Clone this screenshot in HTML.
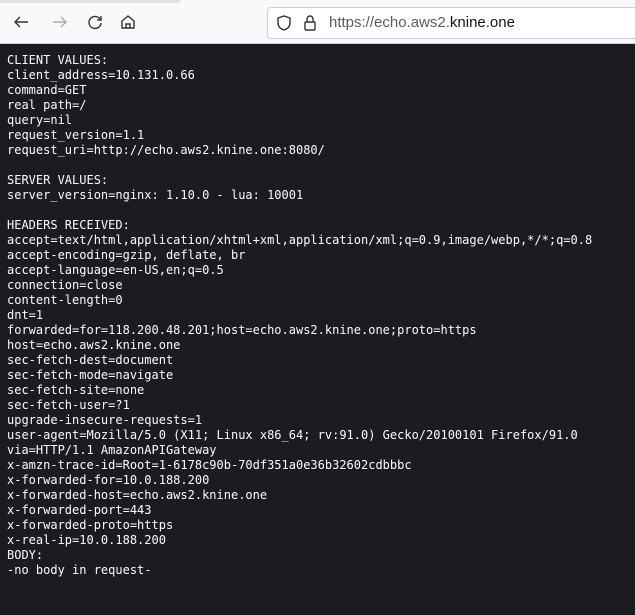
<!DOCTYPE html>
<html><head><style>
html,body{margin:0;padding:0;width:635px;height:615px;overflow:hidden;background:#1c1b22}
.tb{position:absolute;left:0;top:0;width:635px;height:43px;background:#f9f9fb;border-bottom:1px solid #cfcfd8}
.top{position:absolute;left:0;top:0;width:180px;height:3px;background:#e0e0e6}
.url{position:absolute;left:267px;top:7px;width:380px;height:30px;background:#fff;border:1px solid #cfcfd8;border-radius:4px;font:15px "Liberation Sans",sans-serif;color:#5b5b66}
.url span{position:absolute;left:61px;top:6px}
pre{position:absolute;left:7px;top:53px;margin:0;font:12px/15px "DejaVu Sans Mono",monospace;color:#fbfbfe}
svg{position:absolute}
</style></head><body>
<div class="tb"><div class="top"></div>
<svg style="left:12px;top:13px" width="18" height="18" viewBox="0 0 18 18" fill="none" stroke="#333" stroke-width="1.4"><path d="M16 9H3M8 4L3 9l5 5"/></svg>
<svg style="left:51px;top:13px" width="18" height="18" viewBox="0 0 18 18" fill="none" stroke="#aaa" stroke-width="1.4"><path d="M2 9h13M10 4l5 5-5 5"/></svg>
<svg style="left:86px;top:13px" width="18" height="18" viewBox="0 0 18 18" fill="none" stroke="#333" stroke-width="1.4"><path d="M14.5 7A6 6 0 1 0 15 10"/><path d="M15 3v4h-4"/></svg>
<svg style="left:119px;top:13px" width="18" height="18" viewBox="0 0 18 18" fill="none" stroke="#333" stroke-width="1.4"><path d="M3 8l6-5 6 5v7H3z"/><path d="M7 15v-4h4v4"/></svg>
<div class="url">
<svg style="left:7px;top:6px" width="18" height="18" viewBox="0 0 18 18" fill="none" stroke="#333" stroke-width="1.4"><path d="M9 2l6 2v5c0 4-3 6-6 7-3-1-6-3-6-7V4z"/></svg>
<svg style="left:34px;top:5px" width="16" height="20" viewBox="0 0 16 20" fill="none" stroke="#333" stroke-width="1.4"><rect x="3" y="9" width="10" height="8" rx="1"/><path d="M5 9V6a3 3 0 0 1 6 0v3"/></svg>
<span>https://echo.aws2.<b style="color:#15141a;font-weight:normal">knine.one</b></span></div>
</div>
<pre>CLIENT VALUES:
client_address=10.131.0.66
command=GET
real path=/
query=nil
request_version=1.1
request_uri=http://echo.aws2.knine.one:8080/

SERVER VALUES:
server_version=nginx: 1.10.0 - lua: 10001

HEADERS RECEIVED:
accept=text/html,application/xhtml+xml,application/xml;q=0.9,image/webp,*/*;q=0.8
accept-encoding=gzip, deflate, br
accept-language=en-US,en;q=0.5
connection=close
content-length=0
dnt=1
forwarded=for=118.200.48.201;host=echo.aws2.knine.one;proto=https
host=echo.aws2.knine.one
sec-fetch-dest=document
sec-fetch-mode=navigate
sec-fetch-site=none
sec-fetch-user=?1
upgrade-insecure-requests=1
user-agent=Mozilla/5.0 (X11; Linux x86_64; rv:91.0) Gecko/20100101 Firefox/91.0
via=HTTP/1.1 AmazonAPIGateway
x-amzn-trace-id=Root=1-6178c90b-70df351a0e36b32602cdbbbc
x-forwarded-for=10.0.188.200
x-forwarded-host=echo.aws2.knine.one
x-forwarded-port=443
x-forwarded-proto=https
x-real-ip=10.0.188.200
BODY:
-no body in request-</pre>
</body></html>
